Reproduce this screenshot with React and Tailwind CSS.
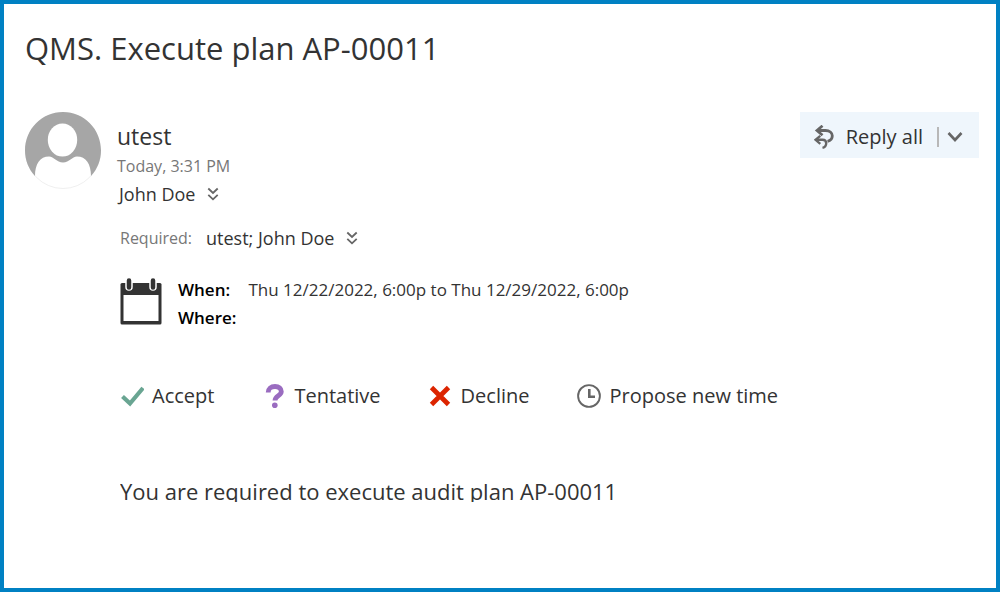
import React from 'react';

const Avatar = () => (
  <svg className="w-[76px] h-[77px] shrink-0" viewBox="0 0 76 77" aria-hidden="true">
    <ellipse cx="38" cy="38.5" rx="37.5" ry="38" fill="#fff" stroke="#e4e4e4" strokeWidth="0.6" />
    <path
      fill="#a6a6a6"
      d="M38 0C17 0 0 17 0 38.5c0 9.500 3.500 18.500 10 25.500C10 52 15 44.500 24 44.500c5 0 7.500 6 14 6s9-6 14-6C61 44.500 66 52 66 64c6.500-7 10-16 10-25.500C76 17 59 0 38 0Z"
    />
    <ellipse cx="37.500" cy="28" rx="14.700" ry="16.500" fill="#fff" />
  </svg>
);

const DoubleChevron = () => (
  <svg className="w-3 h-4" viewBox="0 0 12 16" fill="none" stroke="#666" strokeWidth="1.800" aria-hidden="true">
    <path d="M1.300 2.500 6 7l4.700-4.500M1.300 8.800 6 13.300l4.700-4.500" />
  </svg>
);

const ReplyAllIcon = () => (
  <svg className="w-5 h-6" viewBox="0 0 20 24" fill="none" stroke="#666" aria-hidden="true">
    <path strokeWidth="2.800" d="M3 5.500h8.500c4 0 6.800 2.300 6.800 5.300 0 3.200-2 5-4.800 5.500" />
    <path strokeWidth="2.800" d="M8.500 0.800 3 5.500l5.500 4.700" />
    <path strokeWidth="2.400" d="M2 14.800h6.500c2.500 0 3.700 1.300 3.700 3.500 0 2.500-1.500 4-3.700 4.500" />
    <path strokeWidth="2.400" d="M6.300 10.800 1.500 14.800l4.800 4" />
  </svg>
);

const CalendarIcon = () => (
  <svg className="mt-0.5 w-[42px] h-[47px] shrink-0" viewBox="0 0 42 47" aria-hidden="true">
    <rect x="0.500" y="5" width="41" height="41.500" rx="1.500" fill="#333" />
    <rect x="3.500" y="17" width="35" height="26" fill="#fff" />
    <path d="M9 0v9M33 0v9" stroke="#fff" strokeWidth="7.500" strokeLinecap="round" />
    <path d="M9 2.500v7M33 2.500v7" stroke="#333" strokeWidth="4.500" strokeLinecap="round" />
  </svg>
);

const CheckIcon = () => (
  <svg className="w-6 h-6" viewBox="0 0 24 24" fill="none" stroke="#69a592" strokeWidth="4.200" aria-hidden="true">
    <path d="M2.500 12.500 10 19.500 23 4" />
  </svg>
);

const QuestionIcon = () => (
  <svg className="w-6 h-6" viewBox="0 0 24 24" fill="none" aria-hidden="true">
    <path stroke="#9a6cc0" strokeWidth="4.800" d="M6.200 8.500C6.200 4.500 9 2.500 13 2.500s6.300 2 6.300 5c0 4.500-6.300 4-6.300 9" />
    <circle cx="12.800" cy="21.200" r="2.800" fill="#9a6cc0" />
  </svg>
);

const CrossIcon = () => (
  <svg className="w-6 h-6" viewBox="0 0 24 24" fill="none" stroke="#dc2400" strokeWidth="4.800" aria-hidden="true">
    <path d="m2.500 3.500 17 17M19.500 3.500l-17 17" />
  </svg>
);

const ClockIcon = () => (
  <svg className="w-6 h-6" viewBox="0 0 24 24" fill="none" stroke="#666" aria-hidden="true">
    <circle cx="12" cy="12" r="10.900" strokeWidth="1.900" />
    <path strokeWidth="2.600" d="M12.300 5v7.700H18" />
  </svg>
);

const actions = [
  { label: 'Accept', Icon: CheckIcon },
  { label: 'Tentative', Icon: QuestionIcon },
  { label: 'Decline', Icon: CrossIcon },
  { label: 'Propose new time', Icon: ClockIcon },
];

export default function App() {
  return (
    <main className="min-h-screen border-4 border-[#0081c3] bg-white pl-[21px] pr-[17px] pt-6 font-['Open_Sans','Noto_Sans',sans-serif] text-[#333]">
      <h1 className="text-[31px] leading-10">QMS. Execute plan AP-00011</h1>

      <div className="mt-11 flex items-start gap-4">
        <Avatar />
        <div className="grow pt-2">
          <h2 className="text-[23px] leading-8">utest</h2>
          <p className="text-[16px] leading-7 text-[#777]">Today, 3:31 PM</p>
          <div className="flex items-center gap-3 pl-0.5 text-[18px] leading-7">
            <span>John Doe</span>
            <button type="button" aria-label="Show recipients"><DoubleChevron /></button>
          </div>
        </div>
        <div className="flex h-[46px] items-center bg-[#eff6fc] pl-3.5 pr-4 pt-1">
          <button type="button" className="flex items-center gap-3 text-[20px] leading-8">
            <ReplyAllIcon />
            Reply all
          </button>
          <span className="ml-3.5 mr-2 h-5 w-0.5 bg-[#b8b8b8]" />
          <button type="button" aria-label="More reply options">
            <svg className="w-4 h-4" viewBox="0 0 16 16" fill="none" stroke="#666" strokeWidth="2.600">
              <path d="m1.500 4 6.500 7 6.500-7" />
            </svg>
          </button>
        </div>
      </div>

      <div className="pl-[95px]">
        <div className="mt-4 flex items-center text-[18px] leading-7">
          <span className="mr-3.5 text-[16px] text-[#777]">Required:</span>
          <span className="mr-3">utest; John Doe</span>
          <button type="button" aria-label="Show attendees"><DoubleChevron /></button>
        </div>

        <div className="mt-6 flex items-start gap-4">
          <CalendarIcon />
          <dl className="grid grid-cols-[auto_1fr] gap-x-3 text-[17px] leading-7">
            <dt className="font-semibold text-black">When:</dt>
            <dd>Thu 12/22/2022, 6:00p to Thu 12/29/2022, 6:00p</dd>
            <dt className="font-semibold text-black">Where:</dt>
            <dd></dd>
          </dl>
        </div>

        <div className="mt-12 flex flex-wrap gap-12 text-[20px] leading-8">
          {actions.map(({ label, Icon }) => (
            <button key={label} type="button" className="flex items-center gap-2">
              <Icon />
              {label}
            </button>
          ))}
        </div>

        <p className="mt-16 h-[26px] overflow-hidden text-[22px] leading-[30px]">
          You are required to execute audit plan AP-00011
        </p>
      </div>
    </main>
  );
}
